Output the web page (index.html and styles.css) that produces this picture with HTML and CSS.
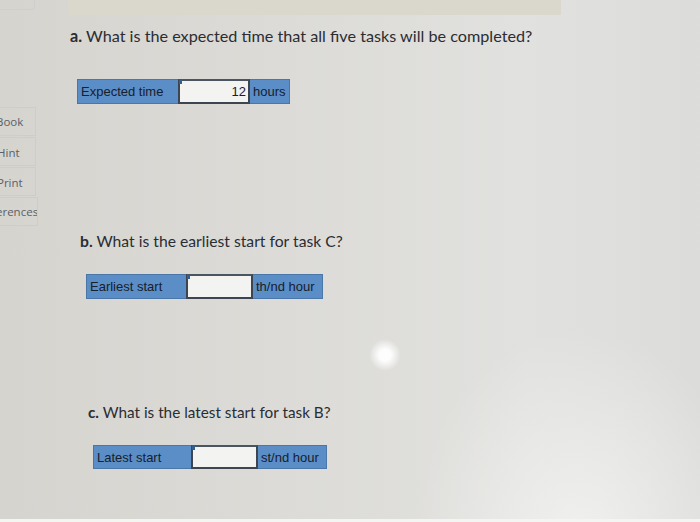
FILE: index.html
```html
<!DOCTYPE html>
<html>
<head>
<meta charset="utf-8">
<link rel="stylesheet" href="styles.css">
</head>
<body>
<div class="screen">
  <div class="topbar">
    <div class="corner"></div>
    <div class="strip"></div>
  </div>
  <div class="main">
    <nav class="side">
      <div class="tab">Book</div>
      <div class="tab">Hint</div>
      <div class="tab">Print</div>
      <div class="tab wide">erences</div>
    </nav>
    <div class="content">
      <section class="q qa">
        <p class="question"><b>a.</b> What is the expected time that all five tasks will be completed?</p>
        <div class="answer">
          <span class="label">Expected time</span>
          <span class="input num">12</span>
          <span class="unit">hours</span>
        </div>
      </section>
      <section class="q qb">
        <p class="question"><b>b.</b> What is the earliest start for task C?</p>
        <div class="answer">
          <span class="label">Earliest start</span>
          <span class="input"></span>
          <span class="unit">th/nd hour</span>
        </div>
      </section>
      <section class="q qc">
        <p class="question"><b>c.</b> What is the latest start for task B?</p>
        <div class="answer">
          <span class="label">Latest start</span>
          <span class="input"></span>
          <span class="unit">st/nd hour</span>
        </div>
      </section>
    </div>
  </div>
  <div class="glare"></div>
  <div class="bottom"></div>
</div>
</body>
</html>
```

FILE: styles.css
```css
html, body {
  margin: 0;
  padding: 0;
}
body {
  width: 700px;
  height: 522px;
  overflow: hidden;
  font-family: "Lato", "Open Sans", sans-serif;
}
.screen {
  position: relative;
  width: 700px;
  height: 522px;
  background:
    radial-gradient(ellipse 240px 300px at 580px 540px, rgba(242,242,240,0.9), rgba(242,242,240,0) 70%),
    linear-gradient(90deg, #d5d4cf 0%, #dcdbd7 40%, #e1e1df 75%, #dcdcda 100%);
  overflow: hidden;
}
.topbar {
  display: flex;
  height: 15px;
}
.corner {
  width: 34px;
  height: 9px;
  border: 1px solid #cfcfcb;
  border-top: none;
  border-left: none;
  border-radius: 0 0 4px 0;
}
.strip {
  margin-left: 33px;
  width: 493px;
  height: 15px;
  background: #dad8cd;
}
.main {
  display: flex;
}
.side {
  width: 36px;
  margin-top: 92px;
  display: flex;
  flex-direction: column;
  flex-shrink: 0;
}
.tab {
  height: 29px;
  margin-bottom: 1px;
  border: 1px solid #cdcdca;
  border-left: none;
  box-sizing: border-box;
  font-family: "Open Sans", sans-serif;
  font-size: 11.5px;
  color: #5b6068;
  line-height: 27px;
  text-indent: -4px;
  overflow: hidden;
  white-space: nowrap;
}
.tab:nth-child(2) { text-indent: -3px; line-height: 29px; }
.tab:nth-child(3) { text-indent: -3px; line-height: 29px; }
.tab.wide {
  width: 38px;
  text-indent: -4px;
}
.content {
  display: flex;
  flex-direction: column;
  padding-left: 34px;
}
.q {
  display: flex;
  flex-direction: column;
}
.question {
  margin: 0;
  font-size: 16.2px;
  color: #2a2d33;
  line-height: 20px;
  white-space: nowrap;
}
.question b {
  font-weight: 700;
}
.answer {
  display: flex;
  align-items: stretch;
  height: 24px;
  font-family: "Liberation Sans", Arial, sans-serif;
  font-size: 13px;
  color: #17202c;
}
.answer span {
  display: flex;
  align-items: center;
  box-sizing: border-box;
}
.label {
  background: #5b8ec6;
  border: 1px solid #4b77a8;
  border-right: none;
  padding-left: 3px;
}
.input {
  background: #f3f3f1;
  border: 2px solid #3d4650;
  border-top-color: #4a5560;
  justify-content: flex-end;
  padding-right: 2px;
  position: relative;
}
.input::before {
  content: "";
  position: absolute;
  left: -1px;
  top: -1px;
  width: 3px;
  height: 4px;
  background: #2f5f93;
}
.unit {
  background: #5b8ec6;
  border: 1px solid #4b77a8;
  border-left: none;
  padding-left: 3px;
  padding-right: 4px;
}
.qa {
  margin-top: 11px;
}
.qa .answer {
  margin-top: 33px;
  margin-left: 7px;
  height: 25px;
}
.qa .label { width: 101px; }
.qa .input { width: 72px; }
.qa .unit { width: 40px; }

.qb {
  margin-top: 127px;
  margin-left: 10px;
}
.qb .question { font-size: 15.7px; }
.qb .answer {
  margin-top: 23px;
  margin-left: 6px;
  height: 25px;
}
.qb .label { width: 100px; }
.qb .input { width: 67px; }
.qb .unit { width: 70px; }

.qc {
  margin-top: 103px;
  margin-left: 18px;
}
.qc .question { font-size: 15.3px; }
.qc .answer {
  margin-top: 23px;
  margin-left: 5px;
}
.qc .label { width: 98px; }
.qc .input { width: 67px; }
.qc .unit { width: 69px; }

.glare {
  position: absolute;
  left: 370px;
  top: 338px;
  width: 30px;
  height: 34px;
  border-radius: 50%;
  background: radial-gradient(circle, rgba(255,255,255,0.95) 25%, rgba(255,255,255,0) 70%);
}
.bottom {
  position: absolute;
  left: 0;
  bottom: 0;
  width: 700px;
  height: 3px;
  background: #f4f4f2;
}
```
